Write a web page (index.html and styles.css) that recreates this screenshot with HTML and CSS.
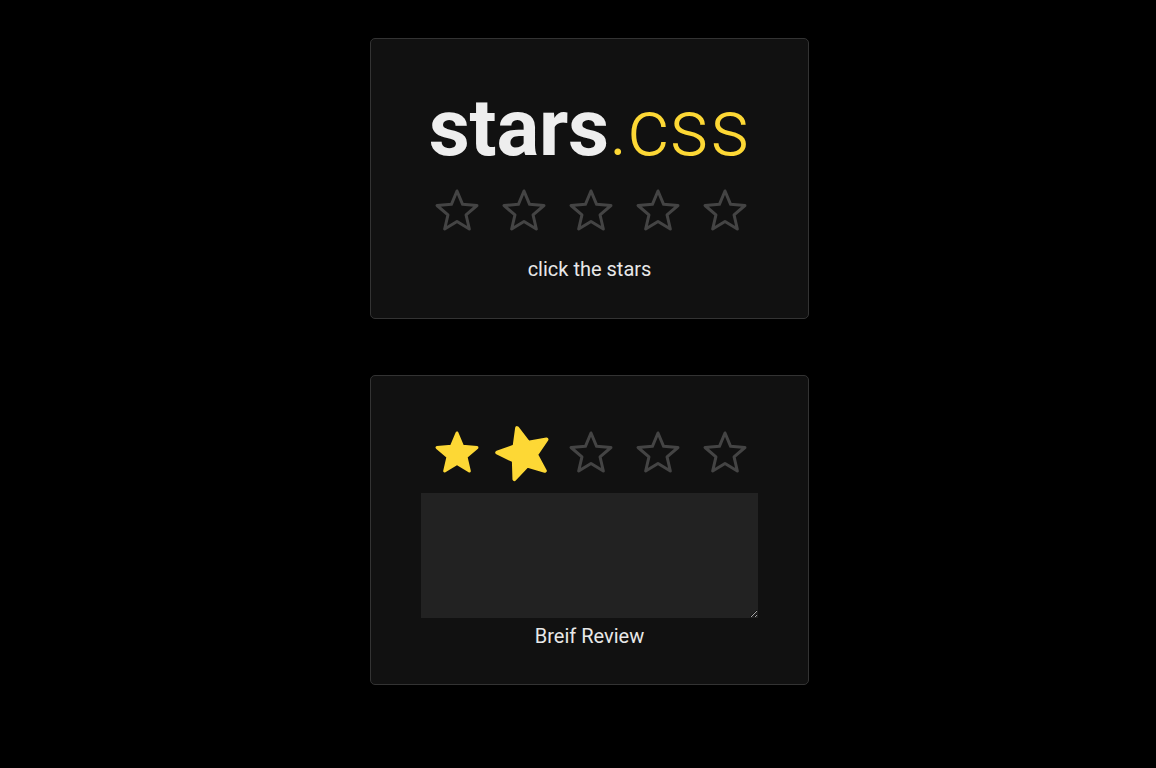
FILE: index.html
```html
<!DOCTYPE html>
<html lang="en">
<head>
<meta charset="utf-8">
<title>stars.css</title>
<link rel="stylesheet" href="styles.css">
</head>
<body>
<main class="page">
  <section class="card card-intro">
    <h1 class="title"><span class="title-bold">stars</span><span class="title-light">.css</span></h1>
    <div class="stars">
      <svg class="star" viewBox="0 0 50 50"><polygon points="25,5 30.58,18.31 44.97,19.51 34.04,28.94 37.34,42.99 25,35.5 12.66,42.99 15.96,28.94 5.03,19.51 19.42,18.31"/></svg>
      <svg class="star" viewBox="0 0 50 50"><polygon points="25,5 30.58,18.31 44.97,19.51 34.04,28.94 37.34,42.99 25,35.5 12.66,42.99 15.96,28.94 5.03,19.51 19.42,18.31"/></svg>
      <svg class="star" viewBox="0 0 50 50"><polygon points="25,5 30.58,18.31 44.97,19.51 34.04,28.94 37.34,42.99 25,35.5 12.66,42.99 15.96,28.94 5.03,19.51 19.42,18.31"/></svg>
      <svg class="star" viewBox="0 0 50 50"><polygon points="25,5 30.58,18.31 44.97,19.51 34.04,28.94 37.34,42.99 25,35.5 12.66,42.99 15.96,28.94 5.03,19.51 19.42,18.31"/></svg>
      <svg class="star" viewBox="0 0 50 50"><polygon points="25,5 30.58,18.31 44.97,19.51 34.04,28.94 37.34,42.99 25,35.5 12.66,42.99 15.96,28.94 5.03,19.51 19.42,18.31"/></svg>
    </div>
    <p class="caption">click the stars</p>
  </section>

  <section class="card card-review">
    <div class="stars">
      <svg class="star star-on" viewBox="0 0 50 50"><polygon points="25,5 30.58,18.31 44.97,19.51 34.04,28.94 37.34,42.99 25,35.5 12.66,42.99 15.96,28.94 5.03,19.51 19.42,18.31"/></svg>
      <svg class="star star-on star-hover" viewBox="0 0 50 50"><polygon points="25,5 30.58,18.31 44.97,19.51 34.04,28.94 37.34,42.99 25,35.5 12.66,42.99 15.96,28.94 5.03,19.51 19.42,18.31"/></svg>
      <svg class="star" viewBox="0 0 50 50"><polygon points="25,5 30.58,18.31 44.97,19.51 34.04,28.94 37.34,42.99 25,35.5 12.66,42.99 15.96,28.94 5.03,19.51 19.42,18.31"/></svg>
      <svg class="star" viewBox="0 0 50 50"><polygon points="25,5 30.58,18.31 44.97,19.51 34.04,28.94 37.34,42.99 25,35.5 12.66,42.99 15.96,28.94 5.03,19.51 19.42,18.31"/></svg>
      <svg class="star" viewBox="0 0 50 50"><polygon points="25,5 30.58,18.31 44.97,19.51 34.04,28.94 37.34,42.99 25,35.5 12.66,42.99 15.96,28.94 5.03,19.51 19.42,18.31"/></svg>
    </div>
    <textarea class="review" aria-label="Breif Review"></textarea>
    <label class="caption review-label">Breif Review</label>
  </section>
</main>
</body>
</html>
```

FILE: styles.css
```css
html, body {
  margin: 0;
  padding: 0;
  background: #000;
}

body {
  font-family: Roboto, "Liberation Sans", sans-serif;
  color: #e6e6e6;
}

.page {
  display: flex;
  flex-direction: column;
  gap: 56px;
  padding: 38px 0 0 370px;
}

.card {
  box-sizing: border-box;
  width: 439px;
  background: #111111;
  border: 1px solid #333333;
  border-radius: 5px;
  display: flex;
  flex-direction: column;
  align-items: center;
}

.card-intro {
  height: 281px;
  padding-top: 49px;
}

.card-review {
  height: 310px;
  padding-top: 52px;
}

.title {
  margin: 0;
  font-size: 80px;
  line-height: 1;
  height: 80px;
  white-space: nowrap;
}

.title-bold {
  font-weight: 700;
  color: #eeeeee;
  letter-spacing: -0.3px;
}

.title-light {
  font-weight: 300;
  color: #fdd835;
}

.stars {
  display: flex;
  gap: 17px;
  margin-left: 3px;
}

.card-intro .stars {
  margin-top: 18px;
}

.star {
  width: 50px;
  height: 50px;
  display: block;
  overflow: visible;
}

.star polygon {
  fill: none;
  stroke: #444444;
  stroke-width: 3;
  stroke-linejoin: round;
}

.star-on polygon {
  fill: #fdd835;
  stroke: #fdd835;
}

.star-hover {
  transform: rotate(-15deg) scale(1.28);
  transform-origin: 50% 52%;
}

.caption {
  margin: 0;
  font-size: 20px;
  font-weight: 400;
  line-height: 24px;
  color: #e8e8e8;
}

.card-intro .caption {
  margin-top: 21px;
}

.review {
  display: block;
  box-sizing: border-box;
  width: 337px;
  height: 125px;
  margin-top: 15px;
  border: none;
  border-radius: 0;
  background: #222222;
  color: #e6e6e6;
  color-scheme: dark;
  outline: none;
  padding: 4px;
}

.review-label {
  margin-top: 6px;
}
```
